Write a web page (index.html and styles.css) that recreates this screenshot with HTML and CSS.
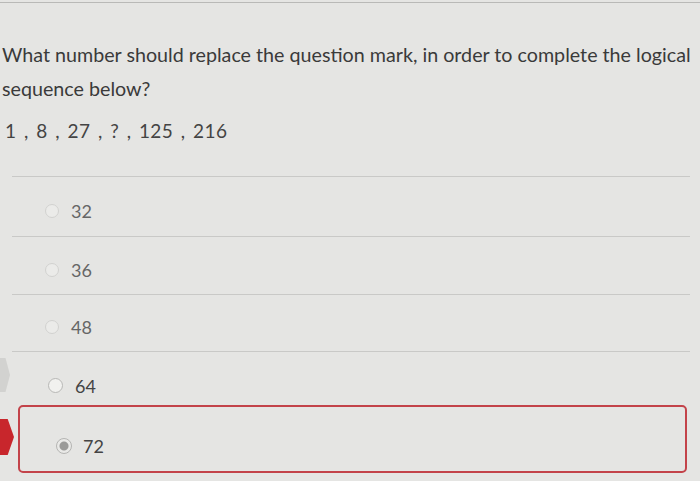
FILE: index.html
```html
<!DOCTYPE html>
<html>
<head>
<meta charset="utf-8">
<link rel="stylesheet" href="styles.css">
</head>
<body>
<div class="page">
  <div class="question">
    <p class="prompt">What number should replace the question mark, in order to complete the logical sequence below?</p>
    <p class="seq">1 , 8 , 27 , ? , 125 , 216</p>
  </div>
  <div class="answers">
    <div class="answer"><span class="radio"></span><span class="label">32</span></div>
    <div class="answer"><span class="radio"></span><span class="label">36</span></div>
    <div class="answer"><span class="radio"></span><span class="label">48</span></div>
    <div class="answer correct"><span class="marker gray"></span><span class="radio"></span><span class="label dark">64</span></div>
    <div class="answer wrong"><span class="marker red"></span><span class="radio checked"></span><span class="label dark">72</span></div>
  </div>
</div>
</body>
</html>
```

FILE: styles.css
```css
html, body {
  margin: 0;
  padding: 0;
}
body {
  width: 700px;
  height: 481px;
  overflow: hidden;
  background: #e5e5e3;
  font-family: Lato, "Open Sans", sans-serif;
}
.page {
  border-top: 1px solid #b9b9b7;
  margin-top: 2px;
  position: relative;
}
.question {
  padding: 35px 0 0 2px;
}
.prompt {
  margin: 0;
  font-size: 19.7px;
  line-height: 34px;
  color: #3a3a3a;
  width: 698px;
}
.seq {
  margin: 10px 0 0 3px;
  font-size: 19px;
  line-height: 30px;
  color: #444;
  letter-spacing: 0.4px;
  word-spacing: 2.3px;
}
.answers {
  margin: 30px 10px 0 12px;
}
.answer {
  position: relative;
  height: 60px;
  box-sizing: border-box;
  border-top: 1px solid #c9c9c7;
  display: flex;
  align-items: center;
  padding: 8px 0 0 33px;
  gap: 12px;
}
.answer:nth-child(2) { height: 58px; }
.answer:nth-child(3) { height: 57px; }
.answer.correct {
  height: 54px;
  padding-top: 14px;
  padding-left: 36px;
}
.radio {
  width: 14px;
  height: 14px;
  border-radius: 50%;
  border: 1px solid #d2d2d0;
  background: #ebebe9;
  box-sizing: border-box;
}
.label {
  font-size: 18px;
  color: #666;
}
.label.dark {
  color: #444;
}
.answer.correct .radio {
  border-color: #b8b8b6;
  background: #f1f1ef;
  width: 15px;
  height: 15px;
}
.answer.wrong {
  border: 2px solid #c3434a;
  border-radius: 5px;
  height: 68px;
  margin-left: 6px;
  margin-right: 3px;
  padding: 14px 0 0 36px;
  gap: 11px;
}
.radio.checked {
  width: 16px;
  height: 16px;
  border: 1px solid #b5b5b3;
  background: radial-gradient(circle, #9a9a98 0 4px, #e9e9e7 5px);
}
.marker {
  position: absolute;
  clip-path: polygon(0 0, 55% 0, 100% 50%, 55% 100%, 0 100%);
}
.marker.gray {
  top: 6px;
  left: -12px;
  width: 10px;
  height: 34px;
  background: #d2d2d0;
}
.marker.red {
  top: 12px;
  left: -20px;
  width: 14px;
  height: 36px;
  background: #c8262c;
}
```
